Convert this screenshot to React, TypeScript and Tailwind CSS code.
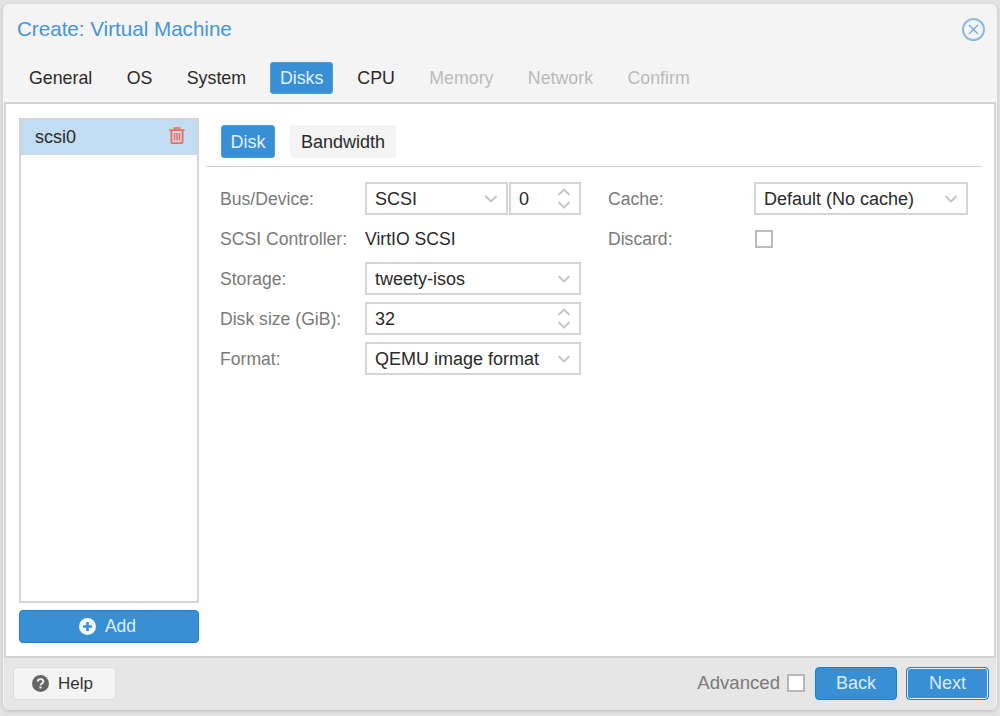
import React from "react";
import { X } from "lucide-react";

const Chevron = () => (
  <svg width="14" height="8" viewBox="0 0 14 8" fill="none" stroke="#c4c4c4" strokeWidth="1.8" className="shrink-0">
    <path d="M1.5 1 L7 6.5 L12.5 1" />
  </svg>
);

const Spin = () => (
  <div className="flex flex-col gap-[5px] shrink-0">
    <svg width="14" height="8" viewBox="0 0 14 8" fill="none" stroke="#c4c4c4" strokeWidth="1.8">
      <path d="M1.5 7 L7 1.5 L12.5 7" />
    </svg>
    <svg width="14" height="8" viewBox="0 0 14 8" fill="none" stroke="#c4c4c4" strokeWidth="1.8">
      <path d="M1.5 1 L7 6.5 L12.5 1" />
    </svg>
  </div>
);

const Field = ({ value, w, spin }: { value: string; w: string; spin?: boolean }) => (
  <div className={`${w} h-[33px] bg-white border-2 border-[#d5d5d5] pl-[8px] pr-[8px] flex items-center justify-between text-[18px] text-[#2a2a2a]`}>
    <span className="pt-[2px]">{value}</span>
    {spin ? <Spin /> : <Chevron />}
  </div>
);

const Label = ({ children, w }: { children: React.ReactNode; w: string }) => (
  <div className={`${w} shrink-0 text-[17.6px] pt-[2px] text-[#7a7a7a]`}>{children}</div>
);

const Tab = ({ label, state }: { label: string; state?: "active" | "off" }) => (
  <div
    className={
      state === "active"
        ? "h-[32px] px-[8.5px] flex items-center rounded-[3px] bg-[#398fd4] text-[#e3f0fa] border border-[#4d9fe0]"
        : state === "off"
          ? "h-[32px] px-[10px] flex items-center text-[#bababa]"
          : "h-[32px] px-[10px] flex items-center text-[#2a2a2a]"
    }
  >
    {label}
  </div>
);

export default function App() {
  return (
    <div className="w-[1000px] h-[716px] bg-[#e4e4e4] pt-[4px] pl-[3px] pr-[3px] pb-[6px] overflow-hidden font-['Liberation_Sans',sans-serif]">
      <div className="w-full h-full flex flex-col rounded-[6px] bg-[#f4f4f4] overflow-hidden pl-px pr-px shadow-[0_1px_4px_rgba(0,0,0,0.18)]">
        <div className="h-[98px] shrink-0 bg-[#f4f4f4] flex flex-col">
          <div className="h-[52px] pl-[13px] pr-[11px] flex items-center justify-between pb-[2px]">
            <span className="text-[20.6px] text-[#4496d8]">Create: Virtual Machine</span>
            <div className="w-[23px] h-[23px] rounded-full border-2 border-[#8cb9e0] flex items-center justify-center">
              <X size={17} strokeWidth={1.5} color="#6ea8d8" />
            </div>
          </div>
          <div className="pl-[15px] mt-[6px] flex items-center gap-[14.4px] text-[17.8px]">
            <Tab label="General" />
            <Tab label="OS" />
            <Tab label="System" />
            <Tab label="Disks" state="active" />
            <Tab label="CPU" />
            <Tab label="Memory" state="off" />
            <Tab label="Network" state="off" />
            <Tab label="Confirm" state="off" />
          </div>
        </div>

        <div className="flex-1 min-h-0 bg-white border-2 border-[#d3d3d3] flex">
          <div className="w-[180px] shrink-0 ml-[13px] mt-[14px] mb-[13px] flex flex-col">
            <div className="flex-1 border-2 border-[#d5d5d5]">
              <div className="h-[35px] bg-[#c2dcf1] pl-[14px] pr-[12px] flex items-center justify-between text-[18px] text-[#2a2a2a]">
                <span>scsi0</span>
                <svg width="16" height="17" viewBox="0 0 16 17" className="mb-[4px]" fill="none" stroke="#f66a5a">
                  <path d="M5.2 2.5V1h5.6v1.5" strokeWidth="1.5" />
                  <path d="M0.5 3.2h15" strokeWidth="1.8" />
                  <path d="M2.4 3.5v11.2c0 .9.6 1.5 1.5 1.5h8.2c.9 0 1.5-.6 1.5-1.5V3.5" strokeWidth="1.8" />
                  <path d="M5.5 6v7.5M8 6v7.5M10.5 6v7.5" strokeWidth="1.5" />
                </svg>
              </div>
            </div>
            <div className="h-[33px] mt-[7px] rounded-[4px] bg-[#398fd4] border border-[#1f80cf] flex items-center justify-center gap-[9px] text-[17.5px] text-[#dcecf9]">
              <svg width="17" height="17" viewBox="0 0 17 17" className="ml-[-3px]">
                <circle cx="8.5" cy="8.5" r="8.5" fill="#f4f9fd" />
                <path d="M8.5 4v9M4 8.5h9" stroke="#398fd4" strokeWidth="2.6" />
              </svg>
              <span>Add</span>
            </div>
          </div>

          <div className="flex-1 ml-[7px] mr-[12px] mt-[21px] flex flex-col">
            <div className="h-[42px] shrink-0 border-b border-[#cfcfcf] pl-[15px] flex gap-[15px] text-[18px]">
              <div className="h-[33px] w-[54px] pt-[2px] flex items-center justify-center rounded-[3px] bg-[#398fd4] border border-[#4d9fe0] text-[#e3f0fa]">
                Disk
              </div>
              <div className="h-[33px] w-[106px] pt-[2px] flex items-center justify-center rounded-[3px] bg-[#f4f4f4] text-[#2a2a2a]">
                Bandwidth
              </div>
            </div>

            <div className="pl-[14px] pt-[15px] flex">
              <div className="w-[361px] shrink-0 flex flex-col gap-[7px]">
                <div className="h-[33px] flex items-center">
                  <Label w="w-[145px]">Bus/Device:</Label>
                  <Field value="SCSI" w="w-[143px] mr-px" />
                  <Field value="0" w="w-[72px]" spin />
                </div>
                <div className="h-[33px] flex items-center">
                  <Label w="w-[145px]">SCSI Controller:</Label>
                  <span className="text-[17.6px] pt-[2px] text-[#2a2a2a]">VirtIO SCSI</span>
                </div>
                <div className="h-[33px] flex items-center">
                  <Label w="w-[145px]">Storage:</Label>
                  <Field value="tweety-isos" w="w-[216px]" />
                </div>
                <div className="h-[33px] flex items-center">
                  <Label w="w-[145px]">Disk size (GiB):</Label>
                  <Field value="32" w="w-[216px]" spin />
                </div>
                <div className="h-[33px] flex items-center">
                  <Label w="w-[145px]">Format:</Label>
                  <Field value="QEMU image format" w="w-[216px]" />
                </div>
              </div>
              <div className="ml-[27px] flex flex-col gap-[7px]">
                <div className="h-[33px] flex items-center">
                  <Label w="w-[146px]">Cache:</Label>
                  <Field value="Default (No cache)" w="w-[214px]" />
                </div>
                <div className="h-[33px] flex items-center">
                  <Label w="w-[147px]">Discard:</Label>
                  <div className="w-[18px] h-[18px] bg-white border-2 border-[#bdbdbd]" />
                </div>
              </div>
            </div>
          </div>
        </div>

        <div className="h-[52px] shrink-0 bg-[#e6e6e6] pl-[9px] pr-[7px] pb-[2px] flex items-center justify-between text-[18px]">
          <div className="w-[103px] h-[33px] pr-[4px] bg-[#f4f4f4] border border-[#dcdcdc] rounded-[4px] flex items-center justify-center gap-[9px] text-[17px] text-[#333]">
            <svg width="17" height="17" viewBox="0 0 17 17">
              <circle cx="8.5" cy="8.5" r="8.5" fill="#666" />
              <path d="M5.8 6.6c0-1.5 1.2-2.5 2.7-2.5s2.8 1 2.8 2.4c0 2-2.7 1.9-2.7 3.7" fill="none" stroke="#f4f4f4" strokeWidth="1.9" />
              <rect x="7.5" y="11.4" width="2" height="2" fill="#f4f4f4" />
            </svg>
            <span className="pt-[2px]">Help</span>
          </div>
          <div className="flex items-center">
            <span className="text-[18.6px] text-[#7a7a7a]">Advanced</span>
            <div className="ml-[7px] w-[18px] h-[18px] bg-white border-2 border-[#b8b8b8]" />
            <div className="ml-[10px] w-[82px] h-[33px] rounded-[4px] bg-[#398fd4] border border-[#1f80cf] flex items-center justify-center text-[#dcecf9]">
              Back
            </div>
            <div className="ml-[9px] w-[83px] h-[33px] rounded-[4px] bg-[#398fd4] border border-[#1f80cf] flex items-center justify-center text-[#dcecf9] shadow-[inset_0_0_0_1px_#e8f2fb]">
              Next
            </div>
          </div>
        </div>
      </div>
    </div>
  );
}
